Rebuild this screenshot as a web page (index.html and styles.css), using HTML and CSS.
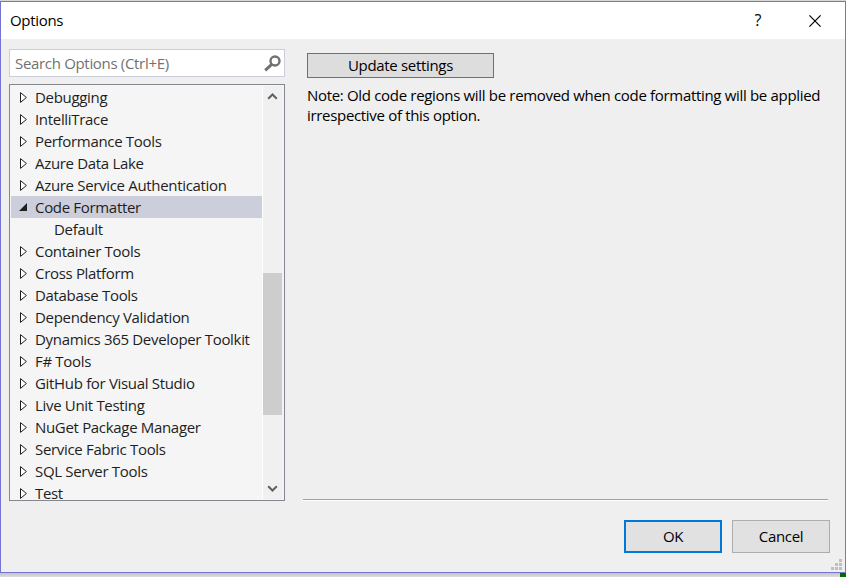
FILE: index.html
```html
<!DOCTYPE html>
<html lang="en">
<head>
  <meta charset="UTF-8">
  <title>Options</title>
  <link rel="stylesheet" href="styles.css">
</head>
<body>

  <div class="dialog">
    <header class="titlebar">
      <span class="title">Options</span>
      <span class="help">?</span>
      <svg class="close" width="12" height="12" viewBox="0 0 12 12"><path d="M.4.4l11.2 11.2M11.6.4L.4 11.6" stroke="#000" stroke-width="1.2"/></svg>
    </header>

    <main class="content">
      <aside class="sidebar">
        <div class="search">
          <span>Search Options (Ctrl+E)</span>
          <svg width="17" height="17" viewBox="0 0 17 17" fill="none" stroke="#717171"><circle cx="11" cy="6" r="4.5" stroke-width="2.4"/><path d="M7.7 9.3L1.2 15.3" stroke-width="3"/></svg>
        </div>

        <div class="tree">
          <ul class="items">
            <li>Debugging</li>
            <li>IntelliTrace</li>
            <li>Performance Tools</li>
            <li>Azure Data Lake</li>
            <li>Azure Service Authentication</li>
            <li class="open">Code Formatter</li>
            <li class="child">Default</li>
            <li>Container Tools</li>
            <li>Cross Platform</li>
            <li>Database Tools</li>
            <li>Dependency Validation</li>
            <li>Dynamics 365 Developer Toolkit</li>
            <li>F# Tools</li>
            <li>GitHub for Visual Studio</li>
            <li>Live Unit Testing</li>
            <li>NuGet Package Manager</li>
            <li>Service Fabric Tools</li>
            <li>SQL Server Tools</li>
            <li>Test</li>
          </ul>
          <div class="scrollbar">
            <svg width="11" height="7" viewBox="0 0 11 7"><path d="M1.2 5.8l4.3-4.3 4.3 4.3" fill="none" stroke="#606060" stroke-width="2"/></svg>
            <div class="thumb"></div>
            <svg width="11" height="7" viewBox="0 0 11 7"><path d="M1.2 1.2l4.3 4.3 4.3-4.3" fill="none" stroke="#606060" stroke-width="2"/></svg>
          </div>
        </div>
      </aside>

      <section class="page">
        <button class="update">Update settings</button>
        <p class="note"><span class="line">Note: Old code regions will be removed when code formatting will be applied</span> <span class="line">irrespective of this option.</span></p>
      </section>
    </main>

    <footer class="actions">
      <button class="ok">OK</button>
      <button class="cancel">Cancel</button>
    </footer>

    <svg class="grip" width="11" height="11" viewBox="0 0 11 11" fill="#bfbfbf"><path d="M8 0h3v3H8zM4 4h3v3H4zM8 4h3v3H8zM0 8h3v3H0zM4 8h3v3H4zM8 8h3v3H8z"/></svg>
  </div>
  <div class="behind"></div>

  <script>
    // expander arrows for the tree rows
    document.querySelectorAll(".items li:not(.child)").forEach(li => {
      const open = li.classList.contains("open");
      li.insertAdjacentHTML("afterbegin", open
        ? '<svg class="arrow" width="9" height="12"><path d="M8 2v8H0z" fill="#1e1e1e"/></svg>'
        : '<svg class="arrow" width="9" height="12"><path d="M1.5 1.6v9.8l5.9-4.9z" fill="#fff" stroke="#1e1e1e"/></svg>');
    });
  </script>
</body>
</html>
```
FILE: styles.css
```css
* {
  box-sizing: border-box;
}
body {
  margin: 0;
  height: 577px;
  padding-top: 1px;
  overflow: hidden;
  background: #d5d9d5;
  font-family: "Open Sans", "Noto Sans", sans-serif;
  font-size: 15px;
  letter-spacing: -0.32px;
  color: #1e1e1e;
}
.dialog {
  position: relative;
  display: flex;
  flex-direction: column;
  height: 572px;
  border: 1px solid #7474d4;
  background: #efefef;
}
.titlebar {
  display: flex;
  align-items: center;
  height: 37px;
  padding: 0 24px 0 9px;
  background: #fff;
  color: #000;
}
.title {
  flex: 1;
  padding-bottom: 2px;
}
.help {
  margin-right: 48px;
  padding-bottom: 2px;
  font-size: 16px;
}
.content {
  display: flex;
  height: 462px;
  padding: 10px 17px 0 8px;
}
.sidebar {
  width: 276px;
}
.search {
  display: flex;
  align-items: center;
  justify-content: space-between;
  height: 28px;
  padding: 0 3px 0 5px;
  border: 1px solid #cccedb;
  background: #fff;
  color: #717171;
}
.tree {
  display: flex;
  height: 417px;
  margin-top: 7px;
  padding: 1px 2px 1px 1px;
  border: 1px solid #828790;
  background: #f5f5f5;
}
.items {
  flex: 1;
  margin: 0;
  padding: 0;
  list-style: none;
  overflow: hidden;
  border-right: 1px solid #fff;
}
.items li {
  display: flex;
  align-items: center;
  height: 22px;
  padding-left: 8px;
  white-space: nowrap;
}
.items .open {
  background: #cccedb;
}
.items .child {
  padding-left: 43px;
}
.arrow {
  margin-right: 7px;
}
.scrollbar {
  display: flex;
  flex-direction: column;
  align-items: center;
  width: 19px;
  padding: 7px 0;
  background: #f0f0f0;
}
.thumb {
  width: 19px;
  height: 142px;
  margin: 173px 0 70px;
  background: #cdcdcd;
}
.page {
  flex: 1;
  height: 451px;
  margin-left: 18px;
  padding: 4px 0 0 4px;
  border-bottom: 1px solid #a0a0a0;
  box-shadow: 0 1px #fff;
  color: #000;
}
button {
  padding: 0 0 2px;
  border: 1px solid #adadad;
  background: #e1e1e1;
  font: inherit;
  letter-spacing: inherit;
  color: #000;
}
.update {
  display: block;
  width: 187px;
  height: 25px;
  border-color: #707070;
  background: #ddd;
}
.note {
  margin: 7px 0 0;
  line-height: 20px;
}
.line {
  display: block;
  white-space: nowrap;
}
.actions {
  display: flex;
  justify-content: flex-end;
  gap: 10px;
  padding: 19px 15px 0 0;
}
.actions button {
  width: 98px;
  height: 33px;
}
.actions .ok {
  border: 2px solid #0078d7;
}
.grip {
  position: absolute;
  right: 3px;
  bottom: 2px;
}
.behind {
  height: 4px;
  border-right: 6px solid #006c00;
  background: linear-gradient(#c4c4c4, #dedede);
}
```
